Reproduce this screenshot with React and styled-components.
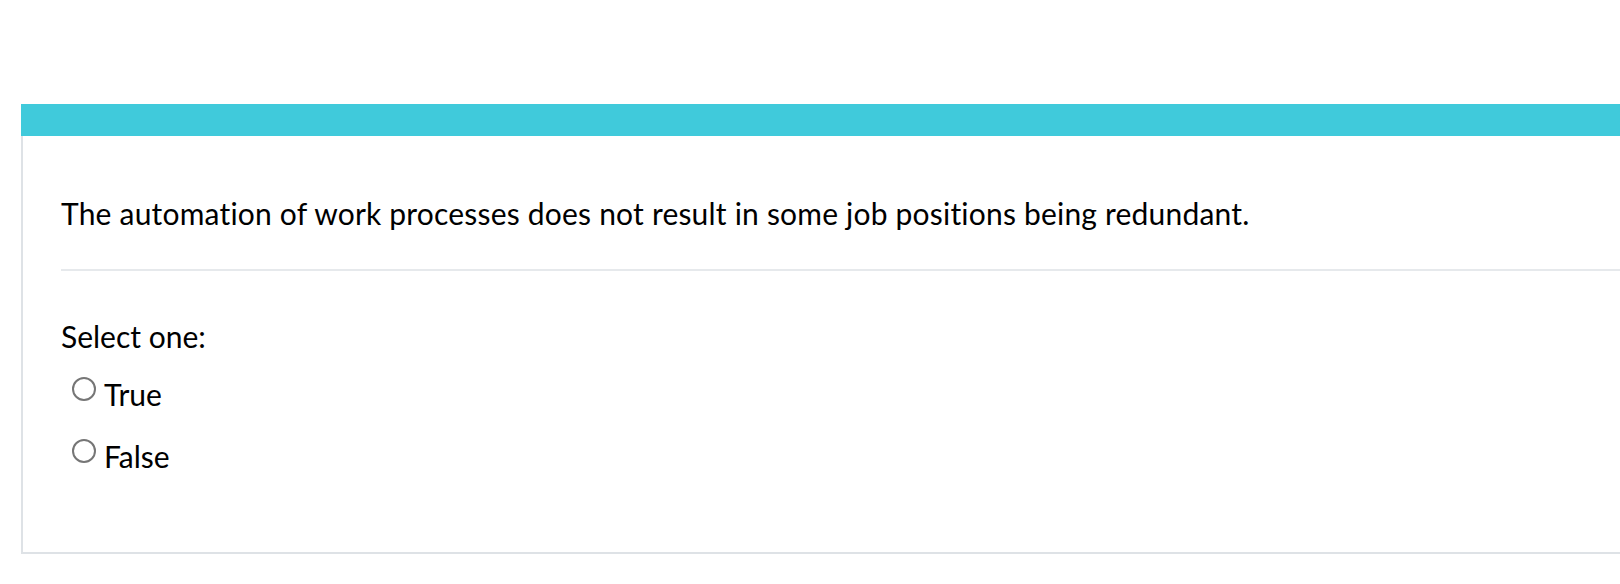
import React from 'react'
import styled, { createGlobalStyle } from 'styled-components'

const GlobalStyle = createGlobalStyle`
  html, body {
    margin: 0;
    padding: 0;
    background: #fff;
    overflow: hidden;
  }
  body {
    font-family: Lato, "Open Sans", sans-serif;
    font-variant-ligatures: none;
    color: #1d2125;
  }
`

const Page = styled.div`
  padding: 104px 0 0 21px;
  height: 584px;
  box-sizing: border-box;
`
const Card = styled.div`
  width: 1700px;
`
const Header = styled.div`
  height: 32px;
  background: #40cadb;
`
const Body = styled.div`
  border-left: 2px solid #dee2e6;
  border-bottom: 2px solid #dee2e6;
  padding: 55px 0 73px 38px;
`
const Question = styled.div`
  font-size: 30px;
  line-height: 45px;
  letter-spacing: 0.2px;
  color: #000;
`
const Divider = styled.hr`
  border: 0;
  border-top: 2px solid #e6e9ec;
  margin: 33px 0 43px;
`
const Prompt = styled.div`
  font-size: 30px;
  line-height: 45px;
  color: #000;
  margin-bottom: 13px;
`
const Options = styled.div`
  display: flex;
  flex-direction: column;
  gap: 17px;
  padding-left: 11px;
`
const Option = styled.label`
  display: flex;
  align-items: flex-start;
  gap: 8px;
  font-size: 30px;
  line-height: 45px;
  color: #000;
`
const Radio = styled.span`
  width: 24px;
  height: 24px;
  box-sizing: border-box;
  border: 2px solid #767676;
  border-radius: 50%;
  margin-top: 5px;
  flex-shrink: 0;
`

const App = () => {
  const answers = ['True', 'False']

  return (
    <Page>
      <GlobalStyle />
      <Card>
        <Header />
        <Body>
          <Question>
            The automation of work processes does not result in some job positions being redundant.
          </Question>
          <Divider />
          <Prompt>Select one:</Prompt>
          <Options>
            {answers.map((answer) => (
              <Option key={answer}>
                <Radio />
                {answer}
              </Option>
            ))}
          </Options>
        </Body>
      </Card>
    </Page>
  )
}

export default App
